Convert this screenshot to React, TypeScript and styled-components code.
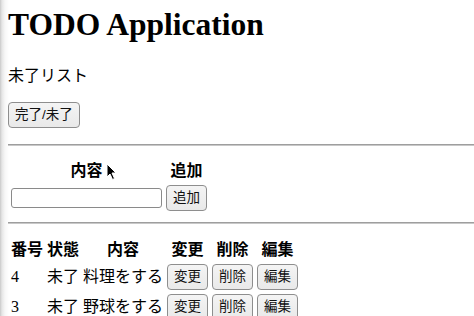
import styled, { createGlobalStyle } from "styled-components";

const GlobalStyle = createGlobalStyle`
	html {
		background: linear-gradient(to right, #c9c9c9 0, #e6e6e6 2px, #f7f7f7 5px, #fff 9px);
		min-height: 100%;
	}
	body {
		margin: 0 0 0 8px;
		color: #000;
		font-family: "Liberation Serif", "Noto Sans CJK JP", serif;
		font-size: 16px;
	}
`;

const Page = styled.div`
	position: relative;
	padding-top: 6px;
`;

const Title = styled.h1`
	margin: 0 0 23px;
	font-size: 31.5px;
	line-height: 37px;
	font-weight: 700;
`;

const SectionLabel = styled.p`
	margin: 0 0 16px;
	line-height: 20px;
`;

const Button = styled.button`
	height: 26px;
	padding: 0 6px;
	margin: 0;
	border: 1px solid #8e8e8e;
	border-radius: 4px;
	background: linear-gradient(#f4f4f4, #e9e9e9);
	color: #111;
	font-family: "Liberation Sans", "Noto Sans CJK JP", sans-serif;
	font-size: 13.5px;
	line-height: 20px;
	display: block;
`;

const Divider = styled.hr<{ $before: number; $after: number }>`
	margin: ${(p) => p.$before}px 0 ${(p) => p.$after}px;
	border: 0;
	border-top: 1px solid #9e9e9e;
	border-bottom: 1px solid #c8c8c8;
	height: 0;
`;

const Table = styled.table`
	border-spacing: 2px;
	font-size: 16px;
`;

const Th = styled.th`
	padding: 1px;
	line-height: 21px;
	font-weight: 700;
	text-align: center;
`;

const Td = styled.td`
	padding: 1px;
	line-height: 20px;
	white-space: nowrap;
	vertical-align: middle;
`;

const TextInput = styled.input`
	box-sizing: border-box;
	width: 151px;
	height: 20px;
	margin: 0;
	border: 1px solid #8a8a8a;
	border-radius: 3px;
	background: #fff;
	display: block;
`;

const Cursor = styled.svg`
	position: absolute;
	left: 98px;
	top: 163px;
`;

const todos = [
	{ id: 4, status: "未了", text: "料理をする" },
	{ id: 3, status: "未了", text: "野球をする" },
];

const App = () => {
	return (
		<Page>
			<GlobalStyle />
			<Title>TODO Application</Title>
			<SectionLabel>未了リスト</SectionLabel>
			<Button>完了/未了</Button>
			<Divider $before={16} $after={11} />
			<Table>
				<thead>
					<tr>
						<Th>内容</Th>
						<Th>追加</Th>
					</tr>
				</thead>
				<tbody>
					<tr>
						<Td>
							<TextInput type="text" />
						</Td>
						<Td>
							<Button>追加</Button>
						</Td>
					</tr>
				</tbody>
			</Table>
			<Divider $before={8} $after={12} />
			<Table>
				<thead>
					<tr>
						<Th>番号</Th>
						<Th>状態</Th>
						<Th>内容</Th>
						<Th>変更</Th>
						<Th>削除</Th>
						<Th>編集</Th>
					</tr>
				</thead>
				<tbody>
					{todos.map((todo) => (
						<tr key={todo.id}>
							<Td>{todo.id}</Td>
							<Td>{todo.status}</Td>
							<Td>{todo.text}</Td>
							<Td>
								<Button>変更</Button>
							</Td>
							<Td>
								<Button>削除</Button>
							</Td>
							<Td>
								<Button>編集</Button>
							</Td>
						</tr>
					))}
				</tbody>
			</Table>
			<Cursor width="12" height="18" viewBox="0 0 12 18">
				<path d="M1 1 L1 14 L4 11 L6.5 16.5 L8.5 15.5 L6 10 L10 10 Z" fill="#000" stroke="#fff" strokeWidth="1" />
			</Cursor>
		</Page>
	);
};

export default App;
